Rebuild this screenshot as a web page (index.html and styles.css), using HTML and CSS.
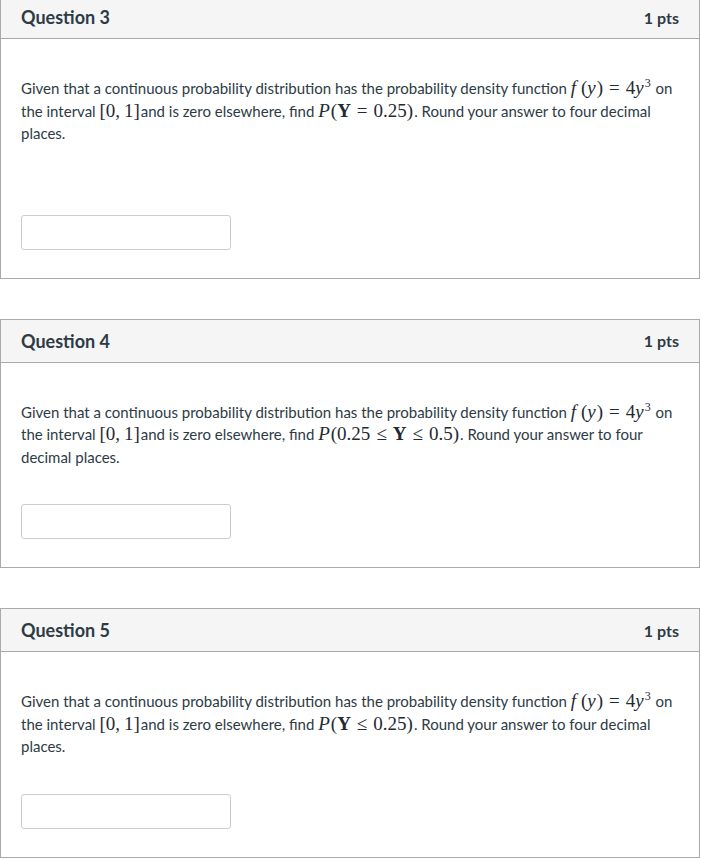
FILE: index.html
```html
<!DOCTYPE html>
<html lang="en">
<head>
<meta charset="utf-8">
<title>Quiz</title>
<link rel="stylesheet" href="styles.css">
</head>
<body>
<div class="quiz">
  <section class="question">
    <header class="q-header"><span class="q-name">Question 3</span><span class="q-pts">1 pts</span></header>
    <div class="q-body">
      <p class="q-text">Given that a continuous probability distribution has the probability density function <span class="math"><i>f</i>&#8201;(<i>y</i>)<span class="rel">=</span>4<i>y</i><sup>3</sup></span> on the interval <span class="math">[0,&#8201;1]</span>and is zero elsewhere, find <span class="math"><i>P</i>(<b>Y</b><span class="rel">=</span>0.25)</span>. Round your answer to four decimal places.</p>
      <p class="q-empty"></p>
      <input class="answer" type="text" aria-label="Answer">
    </div>
  </section>
  <section class="question">
    <header class="q-header"><span class="q-name">Question 4</span><span class="q-pts">1 pts</span></header>
    <div class="q-body">
      <p class="q-text">Given that a continuous probability distribution has the probability density function <span class="math"><i>f</i>&#8201;(<i>y</i>)<span class="rel">=</span>4<i>y</i><sup>3</sup></span> on the interval <span class="math">[0,&#8201;1]</span>and is zero elsewhere, find <span class="math"><i>P</i>(0.25<span class="rel">&le;</span><b>Y</b><span class="rel">&le;</span>0.5)</span>. Round your answer to four decimal places.</p>
      <input class="answer" type="text" aria-label="Answer">
    </div>
  </section>
  <section class="question">
    <header class="q-header"><span class="q-name">Question 5</span><span class="q-pts">1 pts</span></header>
    <div class="q-body">
      <p class="q-text">Given that a continuous probability distribution has the probability density function <span class="math"><i>f</i>&#8201;(<i>y</i>)<span class="rel">=</span>4<i>y</i><sup>3</sup></span> on the interval <span class="math">[0,&#8201;1]</span>and is zero elsewhere, find <span class="math"><i>P</i>(<b>Y</b><span class="rel">&le;</span>0.25)</span>. Round your answer to four decimal places.</p>
      <input class="answer" type="text" aria-label="Answer">
    </div>
  </section>
</div>
</body>
</html>
```
FILE: styles.css
```css
html, body {
  margin: 0;
  padding: 0;
  background: #ffffff;
}
body {
  font-family: Lato, "Open Sans", "Liberation Sans", sans-serif;
  color: #2d3b45;
}
.quiz {
  width: 700px;
  margin-top: -5px;
  display: flex;
  flex-direction: column;
  gap: 40px;
}
.question {
  border: 1px solid #aaaaaa;
  background: #ffffff;
}
.q-header {
  height: 42px;
  display: flex;
  align-items: center;
  justify-content: space-between;
  padding: 0 20px;
  background: #f5f5f5;
  border-bottom: 1px solid #aaaaaa;
}
.q-name {
  font-size: 18px;
  font-weight: 700;
  color: #2d3b45;
}
.q-pts {
  font-size: 16px;
  font-weight: 700;
  color: #2d3b45;
}
.q-body {
  padding: 38px 20px 28px;
}
.q-text {
  margin: 0 0 36px;
  font-size: 15px;
  line-height: 22.5px;
  color: #2d3b45;
}
.q-empty {
  margin: 0;
  height: 34px;
}
.math {
  font-family: "Liberation Serif", "DejaVu Serif", serif;
  font-size: 19px;
  line-height: 1;
  color: #1f2a33;
  white-space: nowrap;
  margin-right: 1px;
}
.math i {
  font-style: italic;
  margin-right: 1px;
}
.math b {
  font-weight: 700;
}
.rel {
  margin: 0 6px;
}
.math sup {
  font-size: 12px;
  line-height: 0;
  vertical-align: 7px;
}
.answer {
  display: block;
  box-sizing: border-box;
  width: 210px;
  height: 35px;
  margin: 0;
  border: 1px solid #cccccc;
  border-radius: 3px;
  background: #ffffff;
  font-family: Lato, sans-serif;
  font-size: 14px;
}
```
